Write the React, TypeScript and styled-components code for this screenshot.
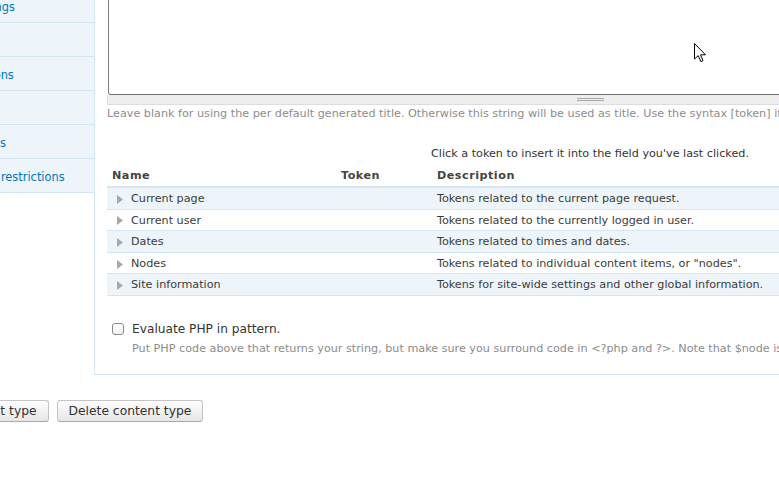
import React from "react";
import styled, { createGlobalStyle } from "styled-components";

const GlobalStyle = createGlobalStyle`
  html, body {
    margin: 0;
    padding: 0;
    background: #ffffff;
    overflow: hidden;
  }
  body {
    font-family: "DejaVu Sans", Verdana, sans-serif;
    color: #333333;
  }
`;

const Page = styled.div`
  position: relative;
  margin: -11px 0 0 -110px;
  width: 1300px;
`;

const VerticalTabs = styled.div`
  display: flex;
  align-items: stretch;
`;

const TabList = styled.ul`
  list-style: none;
  margin: 0;
  padding: 0;
  width: 204px;
  flex: none;
`;

const TabItem = styled.li`
  height: 33px;
  border-bottom: 1px solid #d5e6f3;
  background: #edf5fb;
  display: flex;
  align-items: center;
`;

const TabLink = styled.a`
  padding: 2px 15px 0 20px;
  font-size: 11.4px;
  color: #0074bd;
  text-decoration: none;
  white-space: nowrap;
`;

const Pane = styled.div`
  flex: none;
  width: 991px;
  box-sizing: border-box;
  border-left: 1px solid #d5e6f3;
  border-bottom: 1px solid #d5e6f3;
  padding: 0 12px 18px 12px;
`;

const TextareaBox = styled.div`
  margin-left: 1px;
  height: 106px;
  box-sizing: border-box;
  border: 1px solid #bbbbbb;
  border-left-color: #808080;
  border-bottom-color: #6f6f6f;
  border-radius: 0 0 0 3px;
  background: #ffffff;
`;

const Grippie = styled.div`
  border: 1px solid #dddddd;
  border-top-width: 0;
  background: #eeeeee;
  display: flex;
  justify-content: center;
  padding-top: 3px;
  box-sizing: content-box;
  height: 6px;
`;

const GripLines = styled.span`
  display: block;
  width: 27px;
  height: 1px;
  border-top: 1px solid #a8a8a8;
  border-bottom: 1px solid #a8a8a8;
`;

const Description = styled.div<{ $indent?: number; $gap?: number }>`
  font-size: 11.2px;
  line-height: 15px;
  color: #8c8c8c;
  white-space: nowrap;
  margin-top: ${(p) => p.$gap ?? 1}px;
  padding-left: ${(p) => p.$indent ?? 0}px;
`;

const TokenHelp = styled.div`
  margin-top: 25px;
  font-size: 11.2px;
  line-height: 15px;
  color: #333333;
  text-align: center;
  white-space: nowrap;
`;

const TokenTable = styled.table`
  border-collapse: collapse;
  width: 100%;
  table-layout: fixed;
  font-size: 11.2px;
`;

const HeadCell = styled.th<{ $w: number }>`
  box-sizing: border-box;
  width: ${(p) => p.$w}px;
  text-align: left;
  font-weight: bold;
  color: #444444;
  letter-spacing: 0.5px;
  padding: 7px 5px 3px 5px;
  line-height: 15px;
  border-bottom: 2px solid #d5e6f3;
`;

const Row = styled.tr<{ $odd: boolean }>`
  background: ${(p) => (p.$odd ? "#edf5fb" : "#ffffff")};
  border-bottom: 1px solid #d5e6f3;
`;

const Cell = styled.td`
  box-sizing: border-box;
  padding: 5px 5px 3px 5px;
  line-height: 12.6px;
  color: #3b3b3b;
  white-space: nowrap;
  overflow: hidden;
`;

const NameWrap = styled.span`
  display: flex;
  align-items: center;
  padding-left: 5px;
  gap: 8px;
`;

const Expander = styled.svg`
  width: 6px;
  height: 9px;
  flex: none;
`;

const CheckItem = styled.div`
  margin-top: 25px;
  padding-left: 5px;
`;

const CheckRow = styled.label`
  display: flex;
  align-items: center;
  gap: 8px;
  font-size: 12.2px;
  line-height: 16px;
  color: #333333;
`;

const CheckBox = styled.span`
  width: 12px;
  height: 12px;
  box-sizing: border-box;
  border: 1px solid #8a8a8a;
  border-radius: 3px;
  background: linear-gradient(#ffffff, #f2f2f2);
  flex: none;
`;

const Actions = styled.div`
  display: flex;
  gap: 8px;
  margin-top: 25px;
  padding-left: 22px;
`;

const Button = styled.button`
  font-family: "DejaVu Sans", Verdana, sans-serif;
  font-size: 12.3px;
  height: 22px;
  padding: 1px 11px 0 11px;
  color: #333333;
  border: 1px solid #c4c4c4;
  border-bottom-color: #a8a8a8;
  border-radius: 3px;
  background: linear-gradient(#fdfdfd, #e6e6e6);
  white-space: nowrap;
`;

const Cursor = styled.svg`
  position: absolute;
  left: 804px;
  top: 54px;
  width: 13px;
  height: 20px;
`;

const tabs = [
  "Comment settings",
  "Menu settings",
  "Publishing options",
  "Revisions",
  "Metatag settings",
  "Content access restrictions",
];

const tokens = [
  ["Current page", "Tokens related to the current page request."],
  ["Current user", "Tokens related to the currently logged in user."],
  ["Dates", "Tokens related to times and dates."],
  ["Nodes", 'Tokens related to individual content items, or "nodes".'],
  ["Site information", "Tokens for site-wide settings and other global information."],
];

export default function App() {
  return (
    <>
      <GlobalStyle />
      <Page>
        <VerticalTabs>
          <TabList>
            {tabs.map((t) => (
              <TabItem key={t}>
                <TabLink href="#">{t}</TabLink>
              </TabItem>
            ))}
          </TabList>
          <Pane>
            <TextareaBox />
            <Grippie>
              <GripLines />
            </Grippie>
            <Description>
              Leave blank for using the per default generated title. Otherwise this string will be used as title. Use the syntax [token] if you want to insert a replacement pattern.
            </Description>
            <TokenHelp>Click a token to insert it into the field you've last clicked.</TokenHelp>
            <TokenTable>
              <thead>
                <tr>
                  <HeadCell $w={229}>Name</HeadCell>
                  <HeadCell $w={96}>Token</HeadCell>
                  <HeadCell $w={641}>Description</HeadCell>
                </tr>
              </thead>
              <tbody>
                {tokens.map(([name, desc], i) => (
                  <Row key={name} $odd={i % 2 === 0}>
                    <Cell>
                      <NameWrap>
                        <Expander viewBox="0 0 6 9">
                          <polygon points="0,0 6,4.5 0,9" fill="#a8a8a8" />
                        </Expander>
                        {name}
                      </NameWrap>
                    </Cell>
                    <Cell />
                    <Cell>{desc}</Cell>
                  </Row>
                ))}
              </tbody>
            </TokenTable>
            <CheckItem>
              <CheckRow>
                <CheckBox />
                Evaluate PHP in pattern.
              </CheckRow>
              <Description $indent={20} $gap={4}>
                Put PHP code above that returns your string, but make sure you surround code in &lt;?php and ?&gt;. Note that $node is available and may be used.
              </Description>
            </CheckItem>
          </Pane>
        </VerticalTabs>
        <Actions>
          <Button>Save content type</Button>
          <Button>Delete content type</Button>
        </Actions>
        <Cursor viewBox="0 0 13 20">
          <path
            d="M0.5 0.5 L0.5 16 L4.2 12.6 L6.8 18.6 L9 17.6 L6.5 11.8 L11.5 11.8 Z"
            fill="#ffffff"
            stroke="#000000"
            strokeWidth="1"
            strokeLinejoin="miter"
          />
        </Cursor>
      </Page>
    </>
  );
}
